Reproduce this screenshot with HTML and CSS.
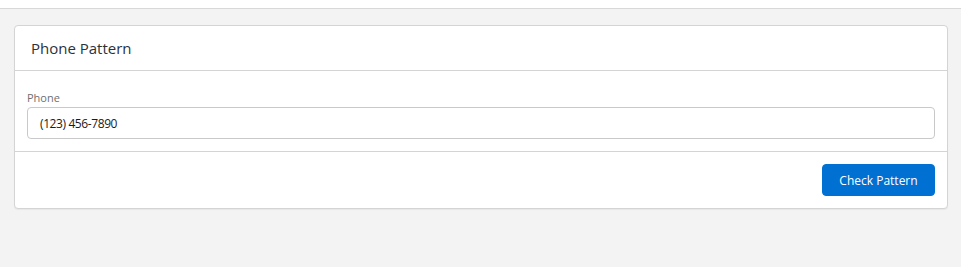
FILE: index.html
```html
<!DOCTYPE html>
<html>
<head>
<meta charset="utf-8">
<link rel="stylesheet" href="styles.css">
</head>
<body>
<div class="topbar"></div>
<main class="page">
  <section class="card">
    <header class="card-header">
      <h2 class="card-title">Phone Pattern</h2>
    </header>
    <div class="card-body">
      <label class="field-label" for="phone">Phone</label>
      <input class="field-input" id="phone" type="text" value="(123) 456-7890">
    </div>
    <footer class="card-footer">
      <button class="btn-brand" type="button">Check Pattern</button>
    </footer>
  </section>
</main>
</body>
</html>
```
FILE: styles.css
```css
html, body {
  margin: 0;
  padding: 0;
  height: 100%;
}
body {
  background: #f3f3f3;
  font-family: "Open Sans", "Noto Sans", sans-serif;
  color: #080707;
}
.topbar {
  height: 8px;
  background: #ffffff;
  border-bottom: 1px solid #d8d8d8;
}
.page {
  padding: 16px 13px 16px 14px;
}
.card {
  background: #ffffff;
  border: 1px solid #d4d4d4;
  border-radius: 4px;
  box-shadow: 0 1px 1px rgba(0,0,0,0.05);
}
.card-header {
  height: 44px;
  display: flex;
  align-items: center;
  padding: 0 16px;
  border-bottom: 1px solid #d4d4d4;
}
.card-title {
  margin: 0;
  font-size: 15px;
  font-weight: 400;
  color: #2b323b;
  letter-spacing: 0;
}
.card-body {
  padding: 20px 12px 12px;
  display: flex;
  flex-direction: column;
}
.field-label {
  font-size: 11px;
  color: #6f6f6f;
  line-height: 14px;
  margin-bottom: 2px;
}
.field-input {
  box-sizing: border-box;
  height: 32px;
  border: 1px solid #c9c9c9;
  border-radius: 4px;
  padding: 0 12px;
  font-family: inherit;
  font-size: 12px;
  letter-spacing: -0.4px;
  color: #1a1a1a;
  background: #ffffff;
  outline: none;
}
.card-footer {
  border-top: 1px solid #d4d4d4;
  padding: 12px;
  display: flex;
  justify-content: flex-end;
}
.btn-brand {
  box-sizing: border-box;
  height: 32px;
  width: 113px;
  border: 1px solid #0070d2;
  background: #0070d2;
  color: #ffffff;
  border-radius: 4px;
  font-family: inherit;
  font-size: 12px;
  padding: 0 12px;
}
```
